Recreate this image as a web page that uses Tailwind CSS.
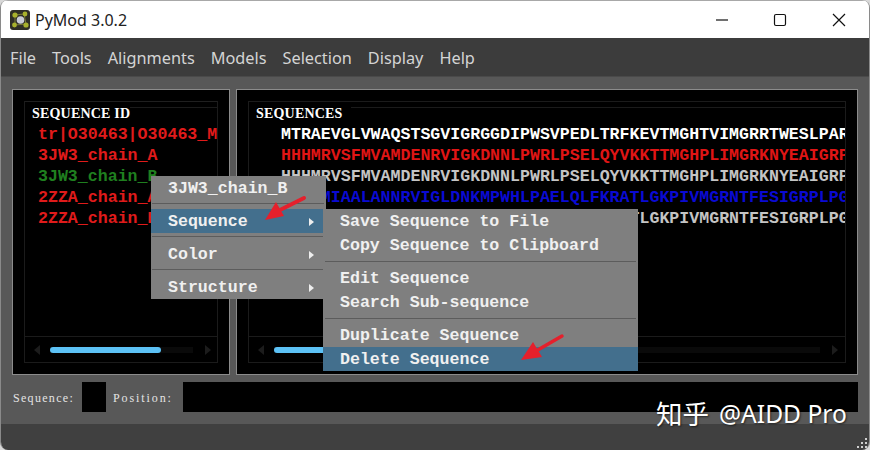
<!DOCTYPE html>
<html>
<head>
<meta charset="utf-8">
<script src="https://cdn.jsdelivr.net/npm/@tailwindcss/browser@4"></script>
</head>
<body class="bg-[#d8d8d8]">
<div class="relative w-[870px] h-[450px] overflow-hidden rounded-[8px] border-x border-[#8a8a8a] flex flex-col font-['Liberation_Mono',monospace]">
  <!-- Title bar -->
  <div class="h-[38px] shrink-0 bg-white border-t border-[#a8a8a8] flex items-center pl-[9px] font-['Noto_Sans',sans-serif] text-[16px] text-[#222]">
    <svg class="w-[20px] h-[20px] mr-[5px]" viewBox="0 0 20 20">
      <rect width="20" height="20" rx="3" fill="#2f2f26"/>
      <path d="M5 5L14 4L16 14L5 15Z" fill="none" stroke="#77793a" stroke-width="1"/>
      <circle cx="5" cy="5" r="2.6" fill="#a8b22c"/>
      <circle cx="15" cy="4" r="2.4" fill="#a8b22c"/>
      <circle cx="16" cy="15" r="2.6" fill="#a8b22c"/>
      <circle cx="4.500" cy="15" r="2.4" fill="#a8b22c"/>
      <circle cx="10.500" cy="10" r="3.800" fill="#c9ccd6"/>
    </svg>
    <span>PyMod 3.0.2</span>
    <div class="ml-auto flex items-center h-full pr-[7px] text-[#111]">
      <svg class="w-[46px] h-[38px]" viewBox="0 0 46 38"><path d="M17 19H29" stroke="#111" stroke-width="1.200"/></svg>
      <svg class="w-[46px] h-[38px] ml-[12px]" viewBox="0 0 46 38"><rect x="17.500" y="13.500" width="11" height="11" rx="1.500" fill="none" stroke="#111" stroke-width="1.200"/></svg>
      <svg class="w-[46px] h-[38px] ml-[13px]" viewBox="0 0 46 38"><path d="M17 13L29 25M29 13L17 25" stroke="#111" stroke-width="1.200"/></svg>
    </div>
  </div>

  <!-- Menu bar -->
  <div class="h-[39px] shrink-0 bg-[#3c3c3c] border-b border-[#4a4a4a] flex items-center gap-[16px] pl-[9px] pt-[2px] font-['Noto_Sans',sans-serif] text-[16.300px] text-[#d4d4d4]">
    <span>File</span><span>Tools</span><span>Alignments</span><span>Models</span><span>Selection</span><span>Display</span><span>Help</span>
  </div>

  <!-- Main -->
  <div class="flex-1 bg-[#585858] flex flex-col pt-[12px] pl-[11px] pr-[11px]">
    <div class="flex gap-[6px] h-[286px]">
      <!-- Left panel -->
      <div class="w-[218px] shrink-0 bg-black border border-[#8c8c8c] p-[11px] pb-[11px]">
        <div class="h-[262px] border border-[#1b1b1b] border-t-[#1f1f1f] flex flex-col font-bold text-[16.6px] leading-[21px]">
          <div class="flex-1 overflow-hidden pl-[7px]">
            <div class="h-[22px] flex items-center font-['Liberation_Serif',serif] text-[14px] tracking-[0.2px] text-white">
              <span>SEQUENCE ID</span><span class="flex-1 h-px bg-[#1b1b1b] self-start mt-[5px]"></span>
            </div>
            <div class="pl-[6px] whitespace-nowrap text-[#e01b1b] overflow-hidden">tr|O30463|O30463_M</div>
            <div class="pl-[6px] text-[#e01b1b]">3JW3_chain_A</div>
            <div class="pl-[6px] text-[#1f7f1f]">3JW3_chain_B</div>
            <div class="pl-[6px] text-[#e01b1b]">2ZZA_chain_A</div>
            <div class="pl-[6px] text-[#e01b1b]">2ZZA_chain_B</div>
          </div>
          <div class="h-[26px] shrink-0 border-t border-[#1b1b1b] flex items-center pl-[9px]">
            <svg class="w-[6px] h-[10px] mr-[10px]" viewBox="0 0 6 10"><path d="M6 0V10L0 5Z" fill="#1c1c1c"/></svg>
            <div class="w-[143px] h-[6px] relative bg-[#0a0a0a]"><div class="w-[111px] h-[6px] rounded-full bg-[#5cc1f5]"></div></div>
            <svg class="w-[6px] h-[10px] ml-[12px]" viewBox="0 0 6 10"><path d="M0 0V10L6 5Z" fill="#1c1c1c"/></svg>
          </div>
        </div>
      </div>
      <!-- Right panel -->
      <div class="flex-1 min-w-0 bg-black border border-[#8c8c8c] p-[11px]">
        <div class="h-[262px] border border-[#1b1b1b] flex flex-col font-bold text-[16.6px] leading-[21px]">
          <div class="flex-1 overflow-hidden pl-[7px]">
            <div class="h-[22px] flex items-center font-['Liberation_Serif',serif] text-[14px] tracking-[0.2px] text-white">
              <span>SEQUENCES</span><span class="flex-1 h-px bg-[#1b1b1b] self-start mt-[5px] ml-[8px]"></span>
            </div>
            <div class="pl-[25px] whitespace-nowrap text-white">MTRAEVGLVWAQSTSGVIGRGGDIPWSVPEDLTRFKEVTMGHTVIMGRRTWESLPARPL</div>
            <div class="pl-[25px] whitespace-nowrap text-[#e01515]">HHHMRVSFMVAMDENRVIGKDNNLPWRLPSELQYVKKTTMGHPLIMGRKNYEAIGRPLP</div>
            <div class="pl-[25px] whitespace-nowrap text-[#c4c4c4]">HHHMRVSFMVAMDENRVIGKDNNLPWRLPSELQYVKKTTMGHPLIMGRKNYEAIGRPLP</div>
            <div class="pl-[25px] whitespace-nowrap text-[#0a0ad2]">HHHHMIAALANNRVIGLDNKMPWHLPAELQLFKRATLGKPIVMGRNTFESIGRPLPGRK</div>
            <div class="pl-[25px] whitespace-nowrap text-[#c4c4c4]">HHHHMIAALANNRVIGLDNKMPWHLPAELQLFKRATLGKPIVMGRNTFESIGRPLPGRK</div>
          </div>
          <div class="h-[26px] shrink-0 border-t border-[#1b1b1b] flex items-center pl-[9px]">
            <svg class="w-[6px] h-[10px] mr-[10px]" viewBox="0 0 6 10"><path d="M6 0V10L0 5Z" fill="#1c1c1c"/></svg>
            <div class="w-[546px] h-[6px] bg-[#0a0a0a]"><div class="w-[330px] h-[6px] rounded-full bg-[#5cc1f5]"></div></div>
            <svg class="w-[6px] h-[10px] ml-[12px]" viewBox="0 0 6 10"><path d="M0 0V10L6 5Z" fill="#1c1c1c"/></svg>
          </div>
        </div>
      </div>
    </div>
    <!-- Sequence/position row -->
    <div class="mt-[7px] h-[30px] flex items-center font-['Liberation_Serif',serif] text-[12px] text-[#e4e4e4]">
      <span class="w-[70px] pl-px pt-[2px] tracking-[1.3px]">Sequence:</span>
      <div class="w-[24px] h-[30px] bg-black"></div>
      <span class="w-[77px] pl-[7px] pt-[2px] tracking-[1.9px]">Position:</span>
      <div class="flex-1 h-[30px] bg-black"></div>
    </div>
  </div>

  <!-- Status bar -->
  <div class="h-[26px] shrink-0 bg-[#404040] relative">
    <svg class="absolute right-px bottom-px w-[11px] h-[11px]" viewBox="0 0 11 11" fill="#cfcfcf">
      <rect x="8" y="0" width="2" height="2"/><rect x="4" y="4" width="2" height="2"/><rect x="8" y="4" width="2" height="2"/>
      <rect x="0" y="8" width="2" height="2"/><rect x="4" y="8" width="2" height="2"/><rect x="8" y="8" width="2" height="2"/>
    </svg>
  </div>

  <!-- Context menu 1 -->
  <div class="absolute left-[150px] top-[176px] w-[175px] h-[123px] bg-[#7f7f7f] font-bold text-[16.6px] text-[#f0f0f0] flex flex-col">
    <div class="h-[27px] flex items-center pl-[17px] shrink-0">3JW3_chain_B</div>
    <div class="mx-[1px] h-px bg-[#5c5c5c] mr-[2px] shrink-0"></div>
    <div class="h-[5px] shrink-0"></div>
    <div class="h-[24px] w-[172px] flex items-center pl-[17px] pr-[9px] pt-[2px] justify-between bg-[#436f8d] shrink-0">Sequence<svg class="w-[5px] h-[8px]" viewBox="0 0 5 8"><path d="M0 0V8L5 4Z" fill="#eee"/></svg></div>
    <div class="h-[3px] shrink-0"></div>
    <div class="mx-[1px] mr-[2px] h-px bg-[#5c5c5c] shrink-0"></div>
    <div class="h-[32px] w-[172px] flex items-center pl-[17px] pr-[9px] pt-[4px] justify-between shrink-0">Color<svg class="w-[5px] h-[8px]" viewBox="0 0 5 8"><path d="M0 0V8L5 4Z" fill="#eee"/></svg></div>
    <div class="mx-[1px] mr-[2px] h-px bg-[#5c5c5c] shrink-0"></div>
    <div class="flex-1 w-[172px] flex items-center pl-[17px] pr-[9px] pt-[6px] justify-between">Structure<svg class="w-[5px] h-[8px]" viewBox="0 0 5 8"><path d="M0 0V8L5 4Z" fill="#eee"/></svg></div>
  </div>

  <!-- Context menu 2 -->
  <div class="absolute left-[322px] top-[209px] w-[315px] h-[162px] bg-[#7f7f7f] font-bold text-[16.6px] text-[#f0f0f0] flex flex-col whitespace-nowrap">
    <div class="h-[24px] flex items-center pl-[17px] pt-[2px]">Save Sequence to File</div>
    <div class="h-[24px] flex items-center pl-[17px] pt-[2px]">Copy Sequence to Clipboard</div>
    <div class="h-[8px] flex items-center px-[2px]"><div class="w-full h-px bg-[#5c5c5c]"></div></div>
    <div class="h-[24px] flex items-center pl-[17px] pt-[4px]">Edit Sequence</div>
    <div class="h-[24px] flex items-center pl-[17px] pt-[4px]">Search Sub-sequence</div>
    <div class="h-[10px] flex items-center px-[2px]"><div class="w-full h-px bg-[#5c5c5c]"></div></div>
    <div class="h-[24px] flex items-center pl-[17px] pt-[2px]">Duplicate Sequence</div>
    <div class="h-[24px] flex items-center pl-[17px] pt-[2px] bg-[#436f8d]">Delete Sequence</div>
  </div>

  <!-- Red arrows -->
  <svg class="absolute left-[-1px] top-0 w-[870px] h-[450px] pointer-events-none" viewBox="0 0 870 450">
    <path d="M304 198L280 210" stroke="#e5202c" stroke-width="4" stroke-linecap="round" fill="none"/>
    <path d="M265 220L276 202L284 216Z" fill="#e5202c"/>
    <path d="M562 336L536 351" stroke="#e5202c" stroke-width="3.500" stroke-linecap="round" fill="none"/>
    <path d="M521 360L533 342L542 357Z" fill="#e5202c"/>
  </svg>

  <!-- Watermark -->
  <div class="absolute left-[655px] top-[397px] whitespace-nowrap flex items-center gap-[10px] font-['Noto_Sans','Noto_Sans_CJK_SC',sans-serif] text-[24.600px] leading-[34px] text-white [text-shadow:1px_1px_2px_rgba(0,0,0,0.6)]"><span class="text-[26.500px]">知乎</span><span>@AIDD Pro</span></div>
</div>
</body>
</html>
